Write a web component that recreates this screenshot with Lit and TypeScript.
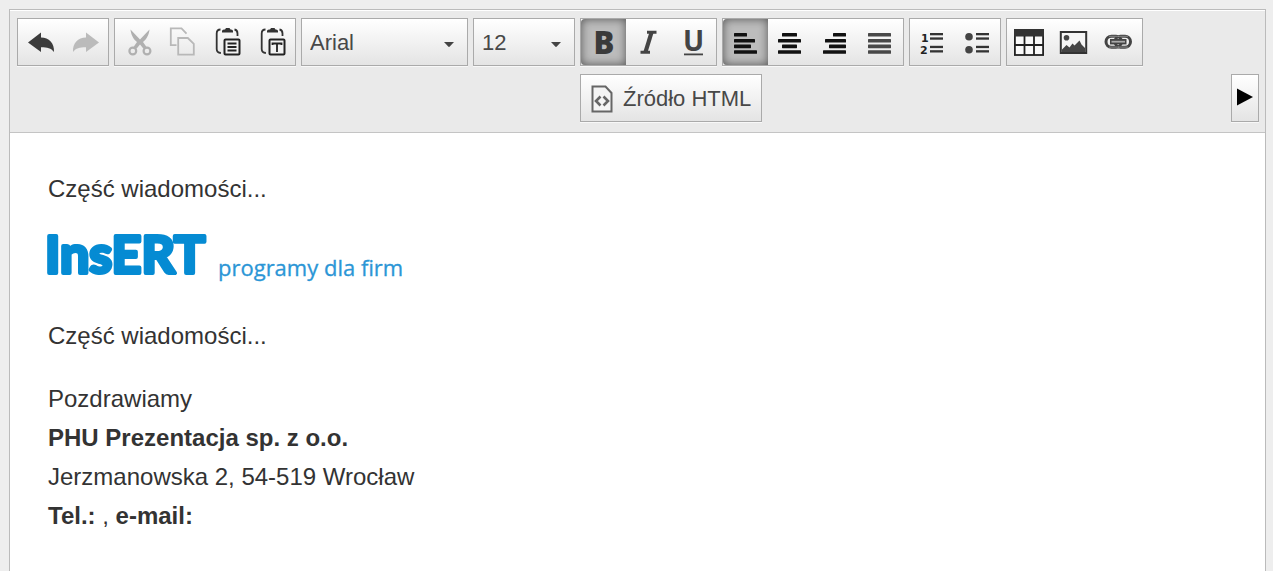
import { LitElement, html, css, svg, type TemplateResult } from "lit";
import { customElement, property, state } from "lit/decorators.js";
import { classMap } from "lit/directives/class-map.js";

const bars = (rows: [number, number][], color = "#111") =>
  rows.map(([x, w], i) => svg`<rect x=${x} y=${[14, 20, 25.6, 31.2][i]} width=${w} height="3.600" rx=".6" fill=${color} />`);

const clipboard = svg`
  <path d="M15.500 10.500q-3.800 0-3.800 4v15.500q0 3.800 4.200 4" fill="none" stroke="#333" stroke-width="1.800"/>
  <path d="M29.500 10.500q3 .5 3 4v2.500" fill="none" stroke="#333" stroke-width="1.800"/>
  <path d="M17 13.500v-1.500q0-1.500 2-1.500h1l1-1.500h3.500l1 1.500h.5q2 0 2 1.500V13.500z" fill="#333"/>
  <rect x="19.500" y="20.500" width="15" height="15" rx="1" fill="#f2f2f2" stroke="#222" stroke-width="2"/>`;

const pairs = (x: number) =>
  [14, 18.4, 26.8, 31.2].map((y) => svg`<rect x=${x} y=${y} width="13" height="2.300" fill="#333"/>`);

const backArrow = (color: string) =>
  svg`<path d="M10 23.500L23 13.500v5C31 18.500 36.500 24 36 33c-3-4-6.500-4.800-13-4.800V33z" fill=${color}/>`;

const icons: Record<string, unknown> = {
  undo: backArrow("#3c3c3c"),
  redo: svg`<g transform="translate(46 0) scale(-1 1)">${backArrow("#bbb")}</g>`,
  cut: svg`<g transform="translate(1 0)">
    <g fill="none" stroke="#b0b0b0">
      <circle cx="16.800" cy="32" r="3.400" stroke-width="2.200"/><circle cx="31" cy="32" r="3.400" stroke-width="2.200"/>
    </g>
    <path d="M14.500 10.500C15 15 17 20 21 23l-3.500 5 3 1.800 3.500-4.300 3.500 4.300 3-1.800-3.500-5c4-3 6-8 6.500-12.500L24 20.500z" fill="#b0b0b0"/>
  </g>`,
  copy: svg`
    <g transform="translate(1 0)" fill="none" stroke="#b8b8b8" stroke-width="1.800">
      <path d="M15.500 26.200H9.800V9.400H20.500l5 5.200"/>
      <path d="M17.200 19h9.600l6 5.800v10.800H17.200z"/>
    </g>`,
  paste: svg`${clipboard}<path d="M22.500 24.500h9M22.500 28h9M22.500 31.500h9" stroke="#222" stroke-width="1.800"/>`,
  pasteText: svg`${clipboard}<path d="M22.500 26v-1.500h9V26M27 24.500v8.500" fill="none" stroke="#222" stroke-width="1.800"/>`,
  bold: svg`<text x="23" y="34.500" text-anchor="middle" class="glyph-b">B</text>`,
  italic: svg`<path d="M21 13.300h9.500M14.500 33.200h9.500" stroke="#444" stroke-width="3"/>
    <path d="M25.500 13.500L19.500 33" stroke="#444" stroke-width="4.200"/>`,
  underline: svg`<text x="22.500" y="32" text-anchor="middle" class="glyph-u">U</text>
    <rect x="13" y="34.500" width="19" height="1.800" fill="#444"/>`,
  alignLeft: bars([[11, 13], [11, 21], [11, 17], [11, 23]]),
  alignCenter: bars([[14, 15], [10, 23], [14, 15], [10, 23]]),
  alignRight: bars([[20, 13], [12, 21], [16, 17], [10, 23]]),
  justify: bars([[10, 23], [10, 23], [10, 23], [10, 23]], "#484848"),
  numbered: svg`<text x="11" y="23" class="glyph-n">1</text><text x="10" y="35" class="glyph-n">2</text>${pairs(20)}`,
  bulleted: svg`<circle cx="14" cy="17.700" r="3.800" fill="#444"/><circle cx="14" cy="30.800" r="3.800" fill="#444"/>${pairs(21)}`,
  table: svg`<rect x="7.900" y="11" width="28.200" height="25" fill="#fafafa" stroke="#222" stroke-width="1.800"/>
    <rect x="7" y="10" width="30" height="7.500" fill="#333"/>
    <path d="M17.500 17v19M27 17v19M8 26h28" stroke="#222" stroke-width="1.800"/>`,
  image: svg`<rect x="8.800" y="13" width="25.400" height="21" fill="#f5f5f5" stroke="#333" stroke-width="2"/>
    <circle cx="14.500" cy="18.800" r="2.800" fill="#444"/>
    <path d="M10 33v-2.500l4.500-4.500 3 2.500 3-4 2 2 5-5 2 4 3.500 3.500V33z" fill="#444"/>`,
  link: svg`<g fill="none" stroke="#444">
      <rect x="9" y="17.200" width="15.500" height="11" rx="5.500" stroke-width="3"/>
      <rect x="18" y="17.200" width="15.500" height="11" rx="5.500" stroke-width="3"/>
      <path d="M13 22.700h16.500" stroke-width="5.500"/>
      <path d="M14.500 22.700h13.500" stroke="#aaa" stroke-width="1.800"/>
      <path d="M12 17.300h10M21 17.300h10M12 28.100h10M21 28.100h10" stroke="#999" stroke-width=".8"/>
    </g>`,
};

@customElement("tool-button")
class ToolButton extends LitElement {
  @property() icon = "";
  @property() label = "";
  @property({ type: Boolean }) active = false;
  @property({ type: Boolean }) disabled = false;

  static styles = css`
    :host { display: block; }
    .button { display: block; width: 45px; height: 46px; padding: 0; border: 0; background: none; }
    .button.active { background: #bcbcbc; box-shadow: inset 0 0 10px #555; border-radius: 4px 0 0 4px; }
    .icon { display: block; width: 45px; height: 46px; }
    .glyph-b { font: 800 31px "Open Sans", sans-serif; fill: #3a3a3a; }
    .glyph-u { font: 700 28px "Open Sans", sans-serif; fill: #444; }
    .glyph-n { font: 800 11px "DejaVu Sans", sans-serif; fill: #222; }
  `;

  render() {
    return html`<button type="button" class=${classMap({ button: true, active: this.active })}
      aria-label=${this.label} title=${this.label} ?disabled=${this.disabled}>
      <svg class="icon" viewBox="0 0 45 46" aria-hidden="true">${icons[this.icon]}</svg>
    </button>`;
  }
}

type Tool = { icon: string; label: string; off?: boolean };

const history: Tool[] = [
  { icon: "undo", label: "Cofnij" },
  { icon: "redo", label: "Ponów", off: true },
];
const clip: Tool[] = [
  { icon: "cut", label: "Wytnij", off: true },
  { icon: "copy", label: "Kopiuj", off: true },
  { icon: "paste", label: "Wklej" },
  { icon: "pasteText", label: "Wklej jako tekst" },
];
const style: Tool[] = [
  { icon: "bold", label: "Pogrubienie" },
  { icon: "italic", label: "Kursywa" },
  { icon: "underline", label: "Podkreślenie" },
];
const align: Tool[] = [
  { icon: "alignLeft", label: "Do lewej" },
  { icon: "alignCenter", label: "Do środka" },
  { icon: "alignRight", label: "Do prawej" },
  { icon: "justify", label: "Wyjustuj" },
];
const lists: Tool[] = [
  { icon: "numbered", label: "Lista numerowana" },
  { icon: "bulleted", label: "Lista punktowana" },
];
const insert: Tool[] = [
  { icon: "table", label: "Tabela" },
  { icon: "image", label: "Obraz" },
  { icon: "link", label: "Odnośnik" },
];

@customElement("app-root")
class AppRoot extends LitElement {
  @state() private active = new Set(["bold", "alignLeft"]);

  static styles = css`
    :host {
      display: block;
      box-sizing: border-box;
      height: 100vh;
      overflow: hidden;
      padding: 9px 7px 0 9px;
      background: #eee;
      font-family: "Liberation Sans", Arial, sans-serif;
      color: #333;
    }
    .editor { box-sizing: border-box; min-height: 100%; border: 1px solid #bbb; border-bottom: 0; background: #fff; }
    .toolbar {
      display: flex;
      gap: 5px;
      padding: 8px 6px 10px 7px;
      border-bottom: 1px solid #c4c4c4;
      background: #eaeaea;
      box-shadow: inset 0 1px 0 #fff;
    }
    .main { display: flex; flex: 1; flex-wrap: wrap; align-content: flex-start; gap: 8px 5px; }
    .group, .select, .wide, .more {
      box-sizing: border-box;
      height: 48px;
      border: 1px solid #aaa;
      background: linear-gradient(#fff, #e4e4e4);
      box-shadow: 0 1px 0 #f8f8f8;
    }
    .group { display: flex; }
    .field { position: relative; }
    .select {
      display: block;
      appearance: none;
      padding: 0 8px;
      border-radius: 0;
      font: 22px "Liberation Sans", Arial, sans-serif;
      color: #484848;
    }
    .family { width: 167px; }
    .size { width: 102px; }
    .caret { position: absolute; right: 14px; top: 24px; width: 10px; height: 5px; pointer-events: none; }
    .wide {
      display: flex;
      align-items: center;
      gap: 10px;
      padding: 2px 10px 0;
      font: 22px "Liberation Sans", Arial, sans-serif;
      color: #484848;
    }
    .source { width: 22px; height: 28px; }
    .more { align-self: flex-end; width: 28px; padding: 0 0 2px 0; }
    .triangle { display: block; width: 16px; height: 18px; margin: 0 auto; }
    .content { padding: 36px 38px; font-size: 24px; line-height: 39px; }
    .line { margin: 0; }
    .logo { display: block; overflow: visible; width: 400px; height: 56px; margin: 20px 0 32px; }
    .brand {
      font: 700 52px Lato, sans-serif;
      fill: #058bd3;
      stroke: #058bd3;
      stroke-width: 4px;
      stroke-linejoin: round;
    }
    .tagline { font: 22px "Open Sans", sans-serif; fill: #2b96d6; stroke: #2b96d6; stroke-width: .3px; }
    .signature { margin: 24px 0 0; }
  `;

  private group(tools: Tool[]): TemplateResult {
    return html`<div class="group">${tools.map((t) => html`<tool-button .icon=${t.icon} .label=${t.label}
      .active=${this.active.has(t.icon)} .disabled=${!!t.off}></tool-button>`)}</div>`;
  }

  private select(name: string, label: string, options: string[]): TemplateResult {
    return html`<div class="field">
      <select class="select ${name}" aria-label=${label}>${options.map((o) => html`<option>${o}</option>`)}</select>
      <svg class="caret" viewBox="0 0 10 5" aria-hidden="true"><path d="M0 0h10L5.800 4.600Q5 5.200 4.200 4.600z" fill="#444"/></svg>
    </div>`;
  }

  render() {
    return html`<div class="editor">
      <div class="toolbar" role="toolbar" aria-label="Formatowanie">
        ${this.group(history)} ${this.group(clip)}
        ${this.select("family", "Czcionka", ["Arial"])}
        ${this.select("size", "Rozmiar", ["12"])}
        <div class="main">
          ${this.group(style)} ${this.group(align)} ${this.group(lists)} ${this.group(insert)}
          <button type="button" class="wide">
            <svg class="source" viewBox="0 0 22 28" aria-hidden="true">
              <path d="M1.500 1.500H14.500L20.500 8V26.500H1.500z" fill="#f4f4f4" stroke="#666" stroke-width="2"/>
              <path d="M9.500 11.500L5 16l4.500 4.500M12.500 11.500L17 16l-4.500 4.500" fill="none" stroke="#666" stroke-width="2.600"/>
            </svg>
            <span>Źródło HTML</span>
          </button>
        </div>
        <button type="button" class="more" aria-label="Więcej">
          <svg class="triangle" viewBox="0 0 16 18" aria-hidden="true"><path d="M0 0.500L16 9 0 17.500z" fill="#000"/></svg>
        </button>
      </div>
      <div class="content">
        <p class="line">Część wiadomości...</p>
        <svg class="logo" viewBox="0 0 400 56" role="img" aria-label="InsERT programy dla firm">
          <text class="brand" x="-3" y="45">InsERT</text>
          <text class="tagline" x="170" y="48">programy dla firm</text>
        </svg>
        <p class="line">Część wiadomości...</p>
        <p class="signature">Pozdrawiamy<br /><b>PHU Prezentacja sp. z o.o.</b><br />Jerzmanowska 2, 54-519 Wrocław<br /><b>Tel.:</b> , <b>e-mail:</b></p>
      </div>
    </div>`;
  }
}
